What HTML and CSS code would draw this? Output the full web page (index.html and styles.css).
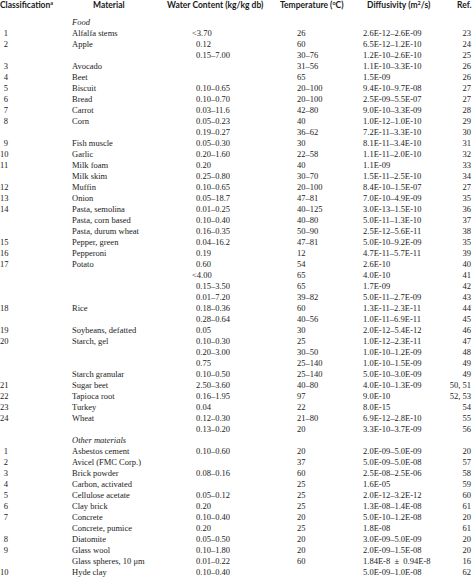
FILE: index.html
```html
<!DOCTYPE html>
<html lang="en">
<head>
<meta charset="utf-8">
<title>Moisture diffusivity table</title>
<link rel="stylesheet" href="styles.css">
</head>
<body>
<div class="table">
  <div class="head">
    <div class="h-cls">Classification<sup>a</sup></div>
    <div class="h-mat">Material</div>
    <div class="h-wc">Water Content (kg/kg db)</div>
    <div class="h-t">Temperature (<sup>o</sup>C)</div>
    <div class="h-d">Diffusivity (m<sup>2</sup>/s)</div>
    <div class="h-r">Ref.</div>
  </div>

  <div class="row"><span></span><span class="sec">Food</span><span></span><span></span><span></span><span></span></div>
  <div class="row"><span>1</span><span>Alfalfa stems</span><span class="lt">&lt;3.70</span><span>26</span><span>2.6E-12–2.6E-09</span><span>23</span></div>
  <div class="row"><span>2</span><span>Apple</span><span>0.12</span><span>60</span><span>6.5E-12–1.2E-10</span><span>24</span></div>
  <div class="row"><span></span><span></span><span>0.15–7.00</span><span>30–76</span><span>1.2E-10–2.6E-10</span><span>25</span></div>
  <div class="row"><span>3</span><span>Avocado</span><span></span><span>31–56</span><span>1.1E-10–3.3E-10</span><span>26</span></div>
  <div class="row"><span>4</span><span>Beet</span><span></span><span>65</span><span>1.5E-09</span><span>26</span></div>
  <div class="row"><span>5</span><span>Biscuit</span><span>0.10–0.65</span><span>20–100</span><span>9.4E-10–9.7E-08</span><span>27</span></div>
  <div class="row"><span>6</span><span>Bread</span><span>0.10–0.70</span><span>20–100</span><span>2.5E-09–5.5E-07</span><span>27</span></div>
  <div class="row"><span>7</span><span>Carrot</span><span>0.03–11.6</span><span>42–80</span><span>9.0E-10–3.3E-09</span><span>28</span></div>
  <div class="row"><span>8</span><span>Corn</span><span>0.05–0.23</span><span>40</span><span>1.0E-12–1.0E-10</span><span>29</span></div>
  <div class="row"><span></span><span></span><span>0.19–0.27</span><span>36–62</span><span>7.2E-11–3.3E-10</span><span>30</span></div>
  <div class="row"><span>9</span><span>Fish muscle</span><span>0.05–0.30</span><span>30</span><span>8.1E-11–3.4E-10</span><span>31</span></div>
  <div class="row"><span>10</span><span>Garlic</span><span>0.20–1.60</span><span>22–58</span><span>1.1E-11–2.0E-10</span><span>32</span></div>
  <div class="row"><span>11</span><span>Milk foam</span><span>0.20</span><span>40</span><span>1.1E-09</span><span>33</span></div>
  <div class="row"><span></span><span>Milk skim</span><span>0.25–0.80</span><span>30–70</span><span>1.5E-11–2.5E-10</span><span>34</span></div>
  <div class="row"><span>12</span><span>Muffin</span><span>0.10–0.65</span><span>20–100</span><span>8.4E-10–1.5E-07</span><span>27</span></div>
  <div class="row"><span>13</span><span>Onion</span><span>0.05–18.7</span><span>47–81</span><span>7.0E-10–4.9E-09</span><span>35</span></div>
  <div class="row"><span>14</span><span>Pasta, semolina</span><span>0.01–0.25</span><span>40–125</span><span>3.0E-13–1.5E-10</span><span>36</span></div>
  <div class="row"><span></span><span>Pasta, corn based</span><span>0.10–0.40</span><span>40–80</span><span>5.0E-11–1.3E-10</span><span>37</span></div>
  <div class="row"><span></span><span>Pasta, durum wheat</span><span>0.16–0.35</span><span>50–90</span><span>2.5E-12–5.6E-11</span><span>38</span></div>
  <div class="row"><span>15</span><span>Pepper, green</span><span>0.04–16.2</span><span>47–81</span><span>5.0E-10–9.2E-09</span><span>35</span></div>
  <div class="row"><span>16</span><span>Pepperoni</span><span>0.19</span><span>12</span><span>4.7E-11–5.7E-11</span><span>39</span></div>
  <div class="row"><span>17</span><span>Potato</span><span>0.60</span><span>54</span><span>2.6E-10</span><span>40</span></div>
  <div class="row"><span></span><span></span><span class="lt">&lt;4.00</span><span>65</span><span>4.0E-10</span><span>41</span></div>
  <div class="row"><span></span><span></span><span>0.15–3.50</span><span>65</span><span>1.7E-09</span><span>42</span></div>
  <div class="row"><span></span><span></span><span>0.01–7.20</span><span>39–82</span><span>5.0E-11–2.7E-09</span><span>43</span></div>
  <div class="row"><span>18</span><span>Rice</span><span>0.18–0.36</span><span>60</span><span>1.3E-11–2.3E-11</span><span>44</span></div>
  <div class="row"><span></span><span></span><span>0.28–0.64</span><span>40–56</span><span>1.0E-11–6.9E-11</span><span>45</span></div>
  <div class="row"><span>19</span><span>Soybeans, defatted</span><span>0.05</span><span>30</span><span>2.0E-12–5.4E-12</span><span>46</span></div>
  <div class="row"><span>20</span><span>Starch, gel</span><span>0.10–0.30</span><span>25</span><span>1.0E-12–2.3E-11</span><span>47</span></div>
  <div class="row"><span></span><span></span><span>0.20–3.00</span><span>30–50</span><span>1.0E-10–1.2E-09</span><span>48</span></div>
  <div class="row"><span></span><span></span><span>0.75</span><span>25–140</span><span>1.0E-10–1.5E-09</span><span>49</span></div>
  <div class="row"><span></span><span>Starch granular</span><span>0.10–0.50</span><span>25–140</span><span>5.0E-10–3.0E-09</span><span>49</span></div>
  <div class="row"><span>21</span><span>Sugar beet</span><span>2.50–3.60</span><span>40–80</span><span>4.0E-10–1.3E-09</span><span>50, 51</span></div>
  <div class="row"><span>22</span><span>Tapioca root</span><span>0.16–1.95</span><span>97</span><span>9.0E-10</span><span>52, 53</span></div>
  <div class="row"><span>23</span><span>Turkey</span><span>0.04</span><span>22</span><span>8.0E-15</span><span>54</span></div>
  <div class="row"><span>24</span><span>Wheat</span><span>0.12–0.30</span><span>21–80</span><span>6.9E-12–2.8E-10</span><span>55</span></div>
  <div class="row"><span></span><span></span><span>0.13–0.20</span><span>20</span><span>3.3E-10–3.7E-09</span><span>56</span></div>
  <div class="row"><span></span><span class="sec">Other materials</span><span></span><span></span><span></span><span></span></div>
  <div class="row"><span>1</span><span>Asbestos cement</span><span>0.10–0.60</span><span>20</span><span>2.0E-09–5.0E-09</span><span>20</span></div>
  <div class="row"><span>2</span><span>Avicel (FMC Corp.)</span><span></span><span>37</span><span>5.0E-09–5.0E-08</span><span>57</span></div>
  <div class="row"><span>3</span><span>Brick powder</span><span>0.08–0.16</span><span>60</span><span>2.5E-08–2.5E-06</span><span>58</span></div>
  <div class="row"><span>4</span><span>Carbon, activated</span><span></span><span>25</span><span>1.6E-05</span><span>59</span></div>
  <div class="row"><span>5</span><span>Cellulose acetate</span><span>0.05–0.12</span><span>25</span><span>2.0E-12–3.2E-12</span><span>60</span></div>
  <div class="row"><span>6</span><span>Clay brick</span><span>0.20</span><span>25</span><span>1.3E-08–1.4E-08</span><span>61</span></div>
  <div class="row"><span>7</span><span>Concrete</span><span>0.10–0.40</span><span>20</span><span>5.0E-10–1.2E-08</span><span>20</span></div>
  <div class="row"><span></span><span>Concrete, pumice</span><span>0.20</span><span>25</span><span>1.8E-08</span><span>61</span></div>
  <div class="row"><span>8</span><span>Diatomite</span><span>0.05–0.50</span><span>20</span><span>3.0E-09–5.0E-09</span><span>20</span></div>
  <div class="row"><span>9</span><span>Glass wool</span><span>0.10–1.80</span><span>20</span><span>2.0E-09–1.5E-08</span><span>20</span></div>
  <div class="row"><span></span><span>Glass spheres, 10 μm</span><span>0.01–0.22</span><span>60</span><span>1.84E-8 &nbsp;±&nbsp; 0.94E-8</span><span>16</span></div>
  <div class="row"><span>10</span><span>Hyde clay</span><span>0.10–0.40</span><span></span><span>5.0E-09–1.0E-08</span><span>62</span></div>
</div>
</body>
</html>
```

FILE: styles.css
```css
html, body {
  margin: 0;
  padding: 0;
  background: #ffffff;
  overflow: hidden;
}

.table {
  width: 474px;
  font-family: "Liberation Serif", "Times New Roman", serif;
  font-size: 8.5px;
  line-height: 11px;
  color: #222222;
}

.head {
  display: grid;
  grid-template-columns: 93px 74px 113px 87px 90px 1fr;
  height: 17px;
  font-family: "Lato", "Liberation Sans", sans-serif;
  font-weight: bold;
  font-size: 8.5px;
  line-height: 11px;
  color: #1a1a1a;
  white-space: nowrap;
}

.head sup {
  font-size: 5.5px;
  line-height: 0;
  vertical-align: 3px;
}

.row {
  display: grid;
  grid-template-columns: 72px 124px 101px 66px 83px 1fr;
  height: 11px;
  white-space: nowrap;
}

.row > span:first-child {
  text-align: right;
  padding-right: 64px;
}

.row > span:last-child {
  text-align: right;
  padding-right: 3px;
}

.sec {
  font-style: italic;
}

.lt {
  margin-left: -4px;
}
```
